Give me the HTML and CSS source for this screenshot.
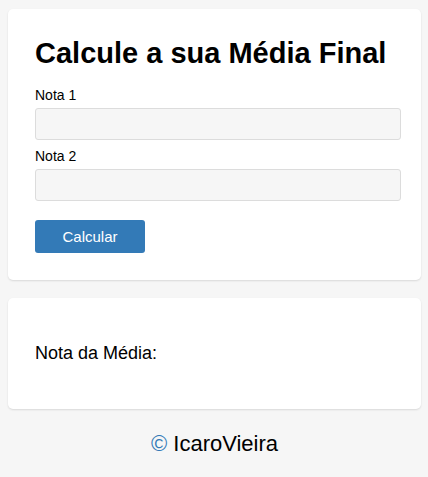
FILE: index.html
```html
<!DOCTYPE html>
<html lang="pt">
<head>
<meta charset="utf-8">
<title>Média Final</title>
<link rel="stylesheet" href="styles.css">
</head>
<body>
<main class="page">
  <section class="card form-card">
    <h1 class="title">Calcule a sua Média Final</h1>
    <div class="field">
      <label class="label" for="n1">Nota 1</label>
      <input class="input" id="n1" type="text">
    </div>
    <div class="field">
      <label class="label" for="n2">Nota 2</label>
      <input class="input" id="n2" type="text">
    </div>
    <button class="btn" type="button">Calcular</button>
  </section>
  <section class="card result-card">
    <p class="result">Nota da Média:</p>
  </section>
  <footer class="footer"><span class="copy">©</span> IcaroVieira</footer>
</main>
</body>
</html>
```
FILE: styles.css
```css
html, body {
  margin: 0;
  padding: 0;
}
body {
  background: #f6f6f6;
  font-family: "Liberation Sans", Arial, sans-serif;
  color: #000;
}
.page {
  padding: 9px 7px 0 8px;
  display: flex;
  flex-direction: column;
}
.card {
  background: #fff;
  border-radius: 5px;
  box-shadow: 0 1px 2px rgba(0,0,0,0.12);
}
.form-card {
  padding: 24px 20px 27px 27px;
}
.title {
  font-size: 29px;
  font-weight: bold;
  margin: 0 0 14px 0;
  line-height: 40px;
}
.field {
  display: flex;
  flex-direction: column;
  margin-bottom: 8px;
}
.label {
  font-size: 14px;
  line-height: 16px;
  margin-bottom: 5px;
}
.input {
  height: 32px;
  box-sizing: border-box;
  background: #f6f6f6;
  border: 1px solid #dcdcdc;
  border-radius: 3px;
  margin: 0;
}
.btn {
  margin-top: 11px;
  width: 110px;
  height: 33px;
  background: #337ab7;
  color: #fff;
  border: none;
  border-radius: 3px;
  font-family: "Liberation Sans", Arial, sans-serif;
  font-size: 15px;
  align-self: flex-start;
}
.result-card {
  margin-top: 18px;
  height: 111px;
  display: flex;
  align-items: center;
  padding: 0 27px;
}
.result {
  margin: 0;
  font-size: 18px;
}
.footer {
  text-align: center;
  font-size: 22px;
  margin-top: 22px;
}
.copy {
  color: #337ab7;
}
```
